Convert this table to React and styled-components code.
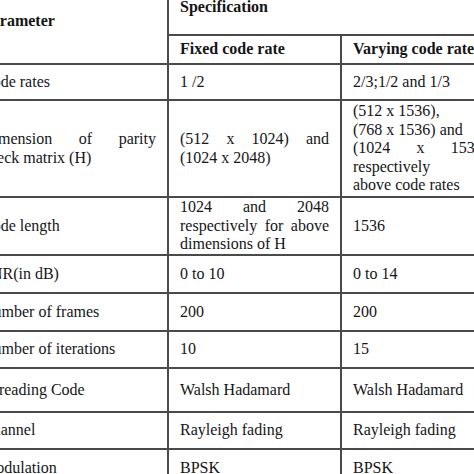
import React from 'react';
import styled, { createGlobalStyle } from 'styled-components';

const Global = createGlobalStyle`
  html, body { margin: 0; padding: 0; background: #fff; }
  body { font-family: "Liberation Serif", "Times New Roman", serif; }
`;

const Frame = styled.div`
  width: 474px;
  height: 474px;
  overflow: hidden;
  background: #fff;
`;

const Table = styled.table`
  margin: -22px 0 0 -31px;
  width: 530px;
  border-collapse: collapse;
  table-layout: fixed;
  font-size: 16px;
  line-height: 18.6px;
  color: #151515;
`;

const Row = styled.tr`
  height: ${(p) => p.$h}px;
`;

const Cell = styled.td`
  border: 2px solid #4a4a4a;
  padding: 0 11px;
  vertical-align: middle;
  text-align: left;
`;

const Head = styled(Cell).attrs({ as: 'th' })`
  font-weight: 700;
`;

const Line = styled.span`
  display: block;
  text-align: ${(p) => (p.$spread ? 'justify' : 'left')};
  text-align-last: ${(p) => (p.$spread ? 'justify' : 'left')};
  white-space: ${(p) => (p.$spread ? 'normal' : 'nowrap')};
`;

const rows = [
  { h: 36, a: ['Code rates'], b: ['1 /2'], c: ['2/3;1/2 and 1/3'] },
  {
    h: 97,
    a: [['Dimension of parity', true], 'check matrix (H)'],
    b: [['(512 x 1024) and', true], '(1024 x 2048)'],
    c: ['(512 x 1536),', '(768 x 1536) and', ['(1024 x 1536)', true], 'respectively', 'above code rates'],
  },
  {
    h: 58,
    a: ['Code length'],
    b: [['1024 and 2048', true], ['respectively for above', true], 'dimensions of H'],
    c: ['1536'],
  },
  { h: 38, a: ['SNR(in dB)'], b: ['0 to 10'], c: ['0 to 14'] },
  { h: 38, a: ['Number of frames'], b: ['200'], c: ['200'] },
  { h: 37, a: ['Number of iterations'], b: ['10'], c: ['15'] },
  { h: 44, a: ['Spreading Code'], b: ['Walsh Hadamard'], c: ['Walsh Hadamard'] },
  { h: 37, a: ['Channel'], b: ['Rayleigh fading'], c: ['Rayleigh fading'] },
  { h: 38, a: ['Modulation'], b: ['BPSK'], c: ['BPSK'] },
];

const Lines = ({ items }) =>
  items.map((it, i) => {
    const [text, spread] = Array.isArray(it) ? it : [it, false];
    return (
      <Line key={i} $spread={spread}>
        {text}
      </Line>
    );
  });

export default function App() {
  return (
    <>
      <Global />
      <Frame>
        <Table>
          <colgroup>
            <col style={{ width: 198 }} />
            <col style={{ width: 173 }} />
            <col style={{ width: 159 }} />
          </colgroup>
          <thead>
            <Row $h={56}>
              <Head rowSpan={2}>Parameter</Head>
              <Head colSpan={2}>Specification</Head>
            </Row>
            <Row $h={29}>
              <Head>Fixed code rate</Head>
              <Head>Varying code rate</Head>
            </Row>
          </thead>
          <tbody>
            {rows.map((r, i) => (
              <Row key={i} $h={r.h}>
                <Cell>
                  <Lines items={r.a} />
                </Cell>
                <Cell>
                  <Lines items={r.b} />
                </Cell>
                <Cell>
                  <Lines items={r.c} />
                </Cell>
              </Row>
            ))}
          </tbody>
        </Table>
      </Frame>
    </>
  );
}
